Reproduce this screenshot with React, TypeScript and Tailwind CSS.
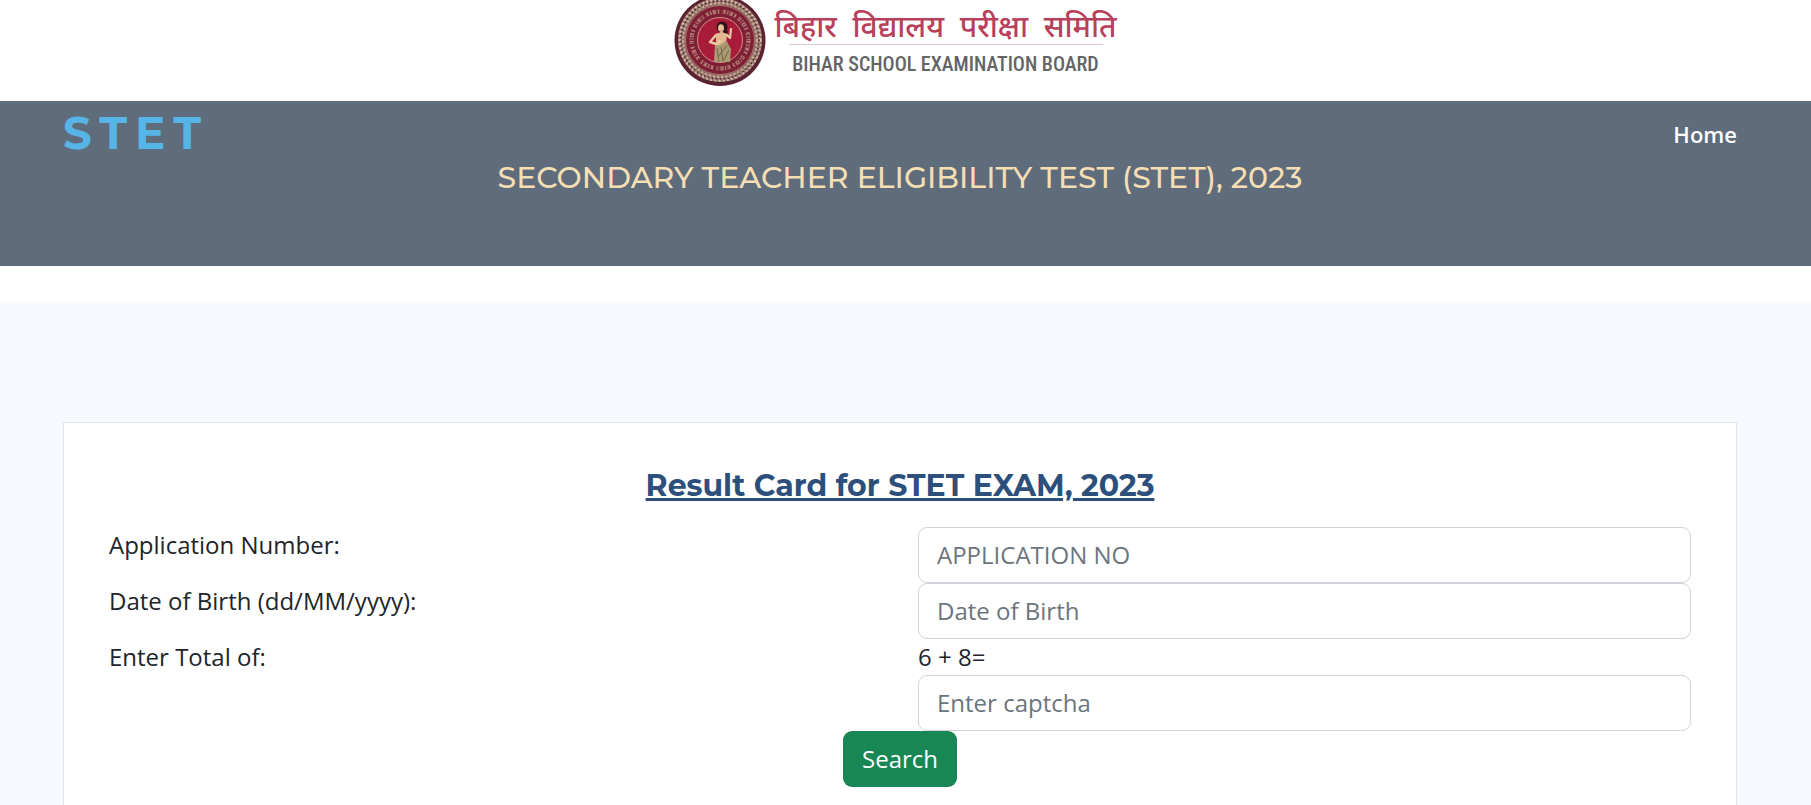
import { useState } from "react";
import type { ReactNode } from "react";

// small bead / lattice ring round the seal
function Ring({ r, dash, width, color }: { r: number; dash: string; width: number; color: string }) {
  return <circle cx="46" cy="40" r={r} fill="none" stroke={color} strokeWidth={width} strokeDasharray={dash} />;
}

function Seal() {
  return (
    <svg className="w-[92px] h-[87px] shrink-0" viewBox="0 0 92 87" role="img" aria-label="Bihar School Examination Board seal">
      <circle cx="46" cy="40.5" r="45.5" fill="#5a2233" />
      <circle cx="46" cy="40" r="38.5" fill="none" stroke="#96766c" strokeWidth="7" />
      <Ring r={40.5} dash="2 2.2" width={2.4} color="#d0b9a6" />
      <Ring r={37} dash="2.2 2" width={2.2} color="#c4a997" />
      <Ring r={39} dash="1.6 2.4" width={1.6} color="#5a2632" />
      <circle cx="46" cy="40" r="34.5" fill="#7d2036" stroke="#b98f7c" strokeWidth="0.8" />
      <Ring r={28.5} dash="3 1.2 1.5 1 4 1.4 2 3" width={4} color="#b07a70" />
      <Ring r={28.5} dash="1 2.6" width={2} color="#7d2036" />
      <circle cx="46" cy="40" r="22.5" fill="#a81c3a" stroke="#d98e86" strokeWidth="1" />
      {/* figure: hair, face, torso, arms, drape */}
      <ellipse cx="48" cy="27" rx="5.5" ry="5.5" fill="#2c1518" />
      <path d="M51 27l3 5-2 3-3-3z" fill="#2c1518" />
      <ellipse cx="47" cy="28" rx="3" ry="3.8" fill="#e9bd96" />
      <path d="M46 30h3v4h-3z" fill="#d9a67f" />
      <path d="M42 34c3-2 8-2 11 0l-1 12H42z" fill="#e3b78f" />
      <path d="M42 35l-6 7 6 2 4-3" stroke="#edc8a2" strokeWidth="2.4" strokeLinejoin="round" strokeLinecap="round" fill="none" />
      <path d="M53 35l3 3 1-9" stroke="#edc8a2" strokeWidth="2.2" strokeLinejoin="round" strokeLinecap="round" fill="none" />
      <path d="M41 45c4 1 8-1 11-5l5 9-1 13H40z" fill="#ab9a74" />
      <path d="M43 48l2 14M47 47l2 14M53 45l-9 12M55 50l-6 11" stroke="#746846" strokeWidth="1" fill="none" />
    </svg>
  );
}

function Field({ id, label, children }: { id: string; label: string; children: ReactNode }) {
  return (
    <div className="grid grid-cols-2 gap-9">
      <label htmlFor={id}>{label}</label>
      <div>{children}</div>
    </div>
  );
}

const inputClass =
  "block w-full h-14 px-[18px] pt-2 pb-[10px] bg-white border border-[#ced4da] rounded-[9px] placeholder:text-[#6c757d] placeholder:opacity-100";

export default function App() {
  const [appNo, setAppNo] = useState("");
  const [dob, setDob] = useState("");
  const [captcha, setCaptcha] = useState("");

  return (
    <div className="min-h-screen bg-white text-2xl leading-9 text-[#212529] font-['Open_Sans',sans-serif]">
      <header className="h-[101px] flex justify-center items-start gap-2 pr-5">
        <Seal />
        <div className="flex flex-col items-center pt-4">
          <p className="text-[30px] leading-7 font-medium text-[#b8405a] whitespace-nowrap font-['Noto_Sans_Devanagari','Noto_Sans',sans-serif]">
            बिहार&nbsp; विद्यालय&nbsp; परीक्षा&nbsp; समिति
          </p>
          <div className="w-[314px] h-px bg-[#dcc8cd]" />
          <p className="mt-[7px] text-xl leading-6 font-medium text-[#636466] whitespace-nowrap font-['Roboto_Condensed','Roboto',sans-serif]">
            BIHAR SCHOOL EXAMINATION BOARD
          </p>
        </div>
      </header>

      <div className="h-[165px] bg-[#5f6c7b] pl-[63px] pr-[74px]">
        <nav className="flex items-center justify-between h-[59px] pt-2">
          <a href="#" className="pb-1 text-[45px] leading-none font-bold tracking-[8px] text-[#56b4e6] font-['Montserrat',sans-serif]">
            STET
          </a>
          <a href="#" className="pb-0.5 text-[22px] font-semibold text-white">Home</a>
        </nav>
        <h1 className="text-center text-[30px] leading-9 font-medium text-[#f5deb3] font-['Montserrat',sans-serif]">
          SECONDARY TEACHER ELIGIBILITY TEST (STET), 2023
        </h1>
      </div>

      <main className="mt-9 min-h-[503px] bg-[#f7f9fe] pt-[120px] pl-[63px] pr-[74px]">
        <form
          className="bg-white border border-b-0 border-[#e4e8ec] px-[45px] pt-[45px] pb-[18px]"
          onSubmit={e => e.preventDefault()}
        >
          <h2 className="mb-[23px] text-center text-[30px] leading-9 font-bold text-[#2c4f7c] underline font-['Montserrat',sans-serif]">
            Result Card for STET EXAM, 2023
          </h2>
          <Field id="app-no" label="Application Number:">
            <input id="app-no" className={inputClass} placeholder="APPLICATION NO" value={appNo} onChange={e => setAppNo(e.target.value)} />
          </Field>
          <Field id="dob" label="Date of Birth (dd/MM/yyyy):">
            <input id="dob" className={inputClass} placeholder="Date of Birth" value={dob} onChange={e => setDob(e.target.value)} />
          </Field>
          <Field id="captcha" label="Enter Total of:">
            <p>6 + 8=</p>
            <input id="captcha" className={inputClass} placeholder="Enter captcha" value={captcha} onChange={e => setCaptcha(e.target.value)} />
          </Field>
          <button type="submit" className="block mx-auto h-14 px-[19px] rounded-[9px] bg-[#198754] text-white">
            Search
          </button>
        </form>
      </main>
    </div>
  );
}
